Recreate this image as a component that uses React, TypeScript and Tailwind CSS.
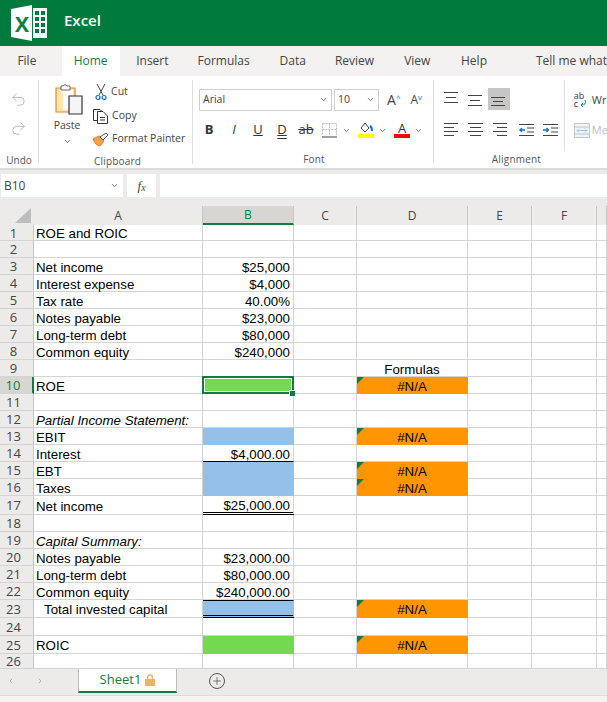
import { ChevronDown, Undo2, Redo2, Plus, ChevronLeft, ChevronRight } from 'lucide-react'

const UI = "font-['Open_Sans',sans-serif]"
const colWidths = ['w-[169px]', 'w-[91px]', 'w-[63px]', 'w-[111px]', 'w-[64px]', 'w-[65px]', 'w-[10px]']
const colNames = ['A', 'B', 'C', 'D', 'E', 'F', '']

type Row = {
  a?: string
  italic?: boolean
  indent?: boolean
  b?: string
  fill?: 'blue' | 'green'
  line?: string
  d?: string
  na?: boolean
  h?: string
}

const NA = { d: '#N/A', na: true }

// rows 1-26 of the sheet
const rows: Row[] = [
  { a: 'ROE and ROIC', h: 'h-[16px]' },
  {},
  { a: 'Net income', b: '$25,000' },
  { a: 'Interest expense', b: '$4,000' },
  { a: 'Tax rate', b: '40.00%' },
  { a: 'Notes payable', b: '$23,000' },
  { a: 'Long-term debt', b: '$80,000' },
  { a: 'Common equity', b: '$240,000' },
  { d: 'Formulas' },
  { a: 'ROE', fill: 'green', ...NA },
  {},
  { a: 'Partial Income Statement:', italic: true },
  { a: 'EBIT', fill: 'blue', ...NA },
  { a: 'Interest', b: '$4,000.00', line: 'border-b border-b-black' },
  { a: 'EBT', fill: 'blue', ...NA },
  { a: 'Taxes', fill: 'blue', ...NA },
  { a: 'Net income', b: '$25,000.00', h: 'h-[19px]', line: 'border-b-[3px] border-b-black border-double' },
  {},
  { a: 'Capital Summary:', italic: true },
  { a: 'Notes payable', b: '$23,000.00' },
  { a: 'Long-term debt', b: '$80,000.00' },
  { a: 'Common equity', b: '$240,000.00' },
  { a: 'Total invested capital', indent: true, fill: 'blue', h: 'h-[18px]', line: 'border-t border-t-black border-b-[3px] border-b-black border-double', ...NA },
  { h: 'h-[18px]' },
  { a: 'ROIC', fill: 'green', h: 'h-[18px]', ...NA },
  { h: 'h-[15px]' },
]

function ExcelLogo() {
  return (
    <div className="relative w-[37px] h-[36px]">
      <svg width="37" height="36" viewBox="0 0 37 36">
        <path d="M0 4 L21 0 V36 L0 32 Z" fill="#fff" />
        <path d="M22 3 H36 V33 H22 Z M24 6 V10 H28 V6 Z M30 6 V10 H34 V6 Z M24 12 V16 H28 V12 Z M30 12 V16 H34 V12 Z M24 18 V22 H28 V18 Z M30 18 V22 H34 V18 Z M24 24 V28 H28 V24 Z M30 24 V28 H34 V24 Z" fill="#fff" fillRule="evenodd" />
      </svg>
      <span className="absolute left-[4px] top-[6px] text-[#107c41] text-[21px] font-bold font-['Open_Sans',sans-serif] leading-[26px]">X</span>
    </div>
  )
}

function Tab({ label, active, w }: { label: string; active?: boolean; w: string }) {
  return (
    <div className={`${w} h-full flex items-center justify-center text-[12px] ${active ? 'bg-white text-[#107c41]' : 'text-[#444]'}`}>
      {label}
    </div>
  )
}

function PasteIcon() {
  return (
    <svg width="29" height="32" viewBox="0 0 29 32">
      <path d="M1 4 H20 V28 H1 Z" fill="#fde6a8" stroke="#e0892b" strokeWidth="1.2" />
      <path d="M3 6 H18 V26 H3 Z" fill="#fff" />
      <path d="M3 6 V26 H8 V8 Z" fill="#fde6a8" />
      <path d="M6 2 H8 Q10 -1 12 2 H15 V6 H6 Z" fill="#fff" stroke="#666" />
      <path d="M14 12 H27 V30 H14 Z" fill="#f5f5f5" stroke="#333" strokeWidth="1.2" />
    </svg>
  )
}

function CutIcon() {
  return (
    <svg width="12" height="18" viewBox="0 0 12 18" fill="none">
      <path d="M2 1 L8 12 M10 1 L4 12" stroke="#444" />
      <circle cx="3" cy="14.5" r="2" stroke="#0a74c9" strokeWidth="1.2" />
      <circle cx="9" cy="14.5" r="2" stroke="#0a74c9" strokeWidth="1.2" />
    </svg>
  )
}

function CopyIcon() {
  return (
    <svg width="17" height="16" viewBox="0 0 17 16" fill="none" stroke="#333">
      <path d="M5 12.5 H1.5 V1.5 H8 L10 3.5" />
      <path d="M5.5 3.5 H11 L15.5 8 V15.5 H5.5 Z" fill="#fff" />
      <path d="M8 9.5 H13 M8 12 H13" />
    </svg>
  )
}

function BrushIcon() {
  return (
    <svg width="17" height="15" viewBox="0 0 17 15">
      <path d="M1 7 L7 4 L12 9 L8 14 Q3 13 1 7 Z" fill="#f2a04a" stroke="#e0802a" />
      <path d="M8 5 L14 1 L16 3 L11 8 Z" fill="#fff" stroke="#555" />
    </svg>
  )
}

function Lines({ widths, y }: { widths: number[]; y: number[] }) {
  // little stack of text lines for the alignment buttons
  return (
    <svg width="15" height="16" viewBox="0 0 15 16" stroke="#444" strokeWidth="1">
      {y.map((v, i) => (
        <path key={i} d={`M${widths[i * 2]} ${v}.5 H${widths[i * 2 + 1]}`} />
      ))}
    </svg>
  )
}

function Indent({ flip }: { flip?: boolean }) {
  return (
    <svg width="15" height="14" viewBox="0 0 15 14" fill="none">
      <path d="M0 1.5 H15 M8 5 H15 M8 9 H15 M0 12.5 H15" stroke="#444" />
      {flip ? (
        <path d="M0 7 H5 M3.5 5 L5.5 7 L3.5 9" stroke="#0a74c9" strokeWidth="1.3" />
      ) : (
        <path d="M6 7 H1 M3 5 L1 7 L3 9" stroke="#0a74c9" strokeWidth="1.3" />
      )}
    </svg>
  )
}

function Sep() {
  return <div className="w-px h-[84px] bg-[#e1dfdd]" />
}

function GroupLabel({ label, w }: { label: string; w: string }) {
  return <div className={`${w} text-center text-[10px] leading-[14px] text-[#555] tracking-[0.2px]`}>{label}</div>
}

function Caret({ className = '' }: { className?: string }) {
  return <ChevronDown size={9} strokeWidth={2} className={`shrink-0 text-[#444] ${className}`} />
}

function Ribbon() {
  return (
    <div className={`h-[92px] bg-white flex pt-[4px] overflow-hidden ${UI} text-[#444]`}>
      {/* Undo */}
      <div className="w-[39px] flex flex-col items-center">
        <Undo2 size={17} strokeWidth={1} className="mt-[11px] ml-[-2px] text-[#a0a0a0]" />
        <Redo2 size={17} strokeWidth={1} className="mt-[12px] ml-[-2px] text-[#a0a0a0]" />
        <div className="mt-[16px] text-[10px] leading-[14px] text-[#555]">Undo</div>
      </div>
      <Sep />
      {/* Clipboard */}
      <div className="w-[153px] shrink-0 flex flex-col">
        <div className="flex h-[72px]">
          <div className="w-[42px] ml-[9px] flex flex-col items-center pt-[4px]">
            <PasteIcon />
            <div className="text-[10.5px] leading-[14px] mt-[2px] -ml-[4px]">Paste</div>
            <Caret className="mt-[5px] -ml-[4px]" />
          </div>
          <div className="flex flex-col text-[10.5px] ml-[2px]">
            <div className="h-[24px] flex items-center gap-[4px] pl-[3px]">
              <CutIcon />
              <span>Cut</span>
            </div>
            <div className="h-[24px] flex items-center gap-[3px]">
              <CopyIcon />
              <span>Copy</span>
            </div>
            <div className="h-[24px] flex items-center gap-[3px] whitespace-nowrap -mt-[1px]">
              <BrushIcon />
              <span>Format Painter</span>
            </div>
          </div>
        </div>
        <GroupLabel label="Clipboard" w="w-full mt-[2px] pl-[4px]" />
      </div>
      <Sep />
      {/* Font */}
      <div className="w-[240px] shrink-0 flex flex-col">
        <div className="flex items-center h-[21px] mt-[9px] ml-[6px] gap-[2px]">
          <div className="w-[133px] h-[22px] border border-[#d0d0d0] flex items-center justify-between px-[3px] text-[10.5px]">
            Arial <Caret />
          </div>
          <div className="w-[45px] h-[22px] border border-[#d0d0d0] flex items-center justify-between px-[3px] text-[10.5px]">
            10 <Caret />
          </div>
          <div className="ml-[6px] text-[14px] leading-none">A<sup className="text-[#0a74c9] text-[8px]">^</sup></div>
          <div className="ml-[8px] text-[12px] leading-none">A<sup className="text-[#0a74c9] text-[8px]">v</sup></div>
        </div>
        <div className="flex items-center h-[24px] mt-[8px] ml-[4px] text-[13px] text-[#333]">
          <div className="w-[24px] text-center font-bold">B</div>
          <div className="w-[26px] text-center italic">I</div>
          <div className="w-[22px] text-center underline">U</div>
          <div className="w-[26px] text-center underline decoration-double">D</div>
          <div className="w-[22px] text-center line-through">ab</div>
          <svg width="15" height="15" viewBox="0 0 15 15" className="ml-[5px]" fill="none">
            <path d="M.5.5 H14.5 V12 M.5.5 V12 M7.5.5 V12 M.5 6.5 H14.5" stroke="#bbb" strokeDasharray="2 1" />
            <path d="M0 14 H15" stroke="#444" />
          </svg>
          <Caret className="ml-[5px]" />
          <div className="ml-[7px] w-[16px] flex flex-col items-center">
            <svg width="13" height="12" viewBox="0 0 13 12" fill="none">
              <path d="M5 1 L1 6 L5 10 L9 6 Z" stroke="#444" />
              <path d="M10 4 Q12 5 12 9" stroke="#0a74c9" strokeWidth="2" />
            </svg>
            <div className="w-[16px] h-[4px] bg-[#ffff00]" />
          </div>
          <Caret className="ml-[4px]" />
          <div className="ml-[7px] w-[16px] flex flex-col items-center">
            <span className="text-[13px] leading-[12px]">A</span>
            <div className="w-[16px] h-[4px] bg-[#ff0000]" />
          </div>
          <Caret className="ml-[4px]" />
        </div>
        <GroupLabel label="Font" w="w-full mt-[10px] pl-[2px]" />
      </div>
      <Sep />
      {/* Alignment */}
      <div className="shrink-0 flex flex-col w-[173px]">
        <div className="flex h-[71px]">
          <div className="w-[133px] pl-[10px] pt-[8px]">
            <div className="flex items-center h-[22px]">
              <div className="w-[24px]"><Lines widths={[0, 14, 2, 12, 0, 14]} y={[1, 6, 11]} /></div>
              <div className="w-[20px]"><Lines widths={[0, 14, 2, 12, 0, 14]} y={[4, 9, 14]} /></div>
              <div className="w-[22px] h-[22px] bg-[#c8c6c4] flex items-center justify-center"><Lines widths={[0, 14, 2, 12, 0, 14]} y={[6, 10, 14]} /></div>
            </div>
            <div className="flex items-center h-[24px] mt-[8px]">
              <div className="w-[24px]"><Lines widths={[0, 14, 0, 10, 0, 14, 0, 10]} y={[1, 5, 9, 13]} /></div>
              <div className="w-[25px]"><Lines widths={[0, 15, 2, 13, 0, 15, 2, 13]} y={[1, 5, 9, 13]} /></div>
              <div className="w-[26px]"><Lines widths={[0, 14, 4, 14, 0, 14, 4, 14]} y={[1, 5, 9, 13]} /></div>
              <div className="w-[24px]"><Indent /></div>
              <div className="w-[20px]"><Indent flip /></div>
            </div>
          </div>
          <div className="w-px h-[71px] bg-[#e1dfdd]" />
          <div className="pl-[9px] pt-[9px] text-[11px] whitespace-nowrap overflow-hidden">
            <div className="flex items-center gap-[2px] h-[22px]">
              <div className="w-[16px] flex flex-col text-[9px] leading-[8px] text-[#333]">
                <span className="h-[8px]">ab</span>
                <div className="flex items-center h-[8px]">
                  <span>c</span>
                  <svg width="9" height="8" viewBox="0 0 9 8" fill="none"><path d="M7 0 Q9 5 3 5 M5 3 L3 5 L5 7" stroke="#0a74c9" /></svg>
                </div>
              </div>
              <span>Wr</span>
            </div>
            <div className="flex items-center gap-[2px] h-[22px] mt-[8px] text-[#bbb]">
              <svg width="16" height="15" viewBox="0 0 16 15" fill="none" className="shrink-0">
                <path d="M.5.5 H15.5 V14.5 H.5 Z" fill="#eef5fb" stroke="#c4c4c4" />
                <path d="M.5 4 H15.5 M.5 11 H15.5" stroke="#c4c4c4" />
                <path d="M3 7.5 H13 M5 5.5 L3 7.5 L5 9.5 M11 5.5 L13 7.5 L11 9.5" stroke="#9fcdee" />
              </svg>
              <span>Me</span>
            </div>
          </div>
        </div>
        <GroupLabel label="Alignment" w="w-full mt-[1px] pr-[8px]" />
      </div>
    </div>
  )
}

function FormulaBar() {
  return (
    <div className={`h-[28px] bg-[#edebe9] flex pt-[4px] pb-[1px] gap-[4px] ${UI}`}>
      <div className="w-[122px] ml-[1px] bg-white flex items-center justify-between pl-[3px] pr-[4px] text-[12px] text-[#444]">
        B10 <Caret />
      </div>
      <div className="w-[29px] bg-white flex items-center justify-center font-['Liberation_Serif',serif] italic text-[13px] text-[#444]">
        f<sub>x</sub>
      </div>
      <div className="flex-1 bg-white" />
    </div>
  )
}

function Cell({ w, className = '', children }: { w: string; className?: string; children?: React.ReactNode }) {
  return (
    <div className={`${w} shrink-0 h-full border-r border-b border-[#d4d4d4] flex items-center relative pt-[3px] leading-[14px] ${className}`}>
      {children}
    </div>
  )
}

function Sheet() {
  return (
    <div className="bg-white flex-1 overflow-hidden font-['Liberation_Sans',sans-serif] text-[13.3px] text-black">
      {/* column headers */}
      <div className={`h-[27px] flex bg-[#edebe9] pt-[8px] text-[12px] text-[#444] ${UI}`}>
        <div className="w-[34px] h-full shrink-0 flex items-end justify-end pr-[3px] pb-[2px]">
          <svg width="16" height="15" viewBox="0 0 16 15"><path d="M16 0 V15 H0 Z" fill="#bdbdbd" /></svg>
        </div>
        {colNames.map((c, i) => (
          <div
            key={i}
            className={`${colWidths[i]} shrink-0 flex items-center justify-center border-r border-[#c8c6c4] ${c === 'B' ? 'bg-[#d8d6d3] text-[#107c41] border-b-2 border-b-[#107c41]' : ''}`}
          >
            {c}
          </div>
        ))}
      </div>
      {rows.map((r, i) => {
        const selected = i === 9
        let fill = ''
        if (r.fill === 'blue') fill = r.line ? 'bg-[#95c0e8] border-r-[#95c0e8]' : 'bg-[#95c0e8] border-r-[#95c0e8] border-b-[#95c0e8]'
        if (r.fill === 'green') fill = 'bg-[#73d94f] border-r-[#73d94f] border-b-[#73d94f]'
        return (
          <div key={i} className={`${r.h ?? 'h-[17px]'} flex`}>
            <div className={`w-[34px] shrink-0 flex items-center justify-center pr-[6px] text-[13px] leading-[14px] text-[#444] border-b border-[#d4d4d4] ${UI} ${selected ? 'bg-[#d8d6d3] !text-[#107c41] border-r-2 border-r-[#107c41]' : 'bg-[#edebe9] border-r border-r-[#c8c6c4]'}`}>
              {i + 1}
            </div>
            <Cell w={colWidths[0]} className={`${r.indent ? 'pl-[10px]' : 'pl-[2px]'} ${r.italic ? 'italic' : ''}`}>
              <span className="whitespace-nowrap">{r.a}</span>
            </Cell>
            <Cell w={colWidths[1]} className={`justify-end pr-[3px] ${fill} ${r.line ?? ''}`}>
              {r.b}
              {selected && (
                <>
                  <div className="absolute z-10 inset-[-1px] border-2 border-[#107c41]">
                    <div className="w-full h-full border border-white" />
                  </div>
                  <div className="absolute z-10 right-[-2px] bottom-[-3px] w-[6px] h-[6px] bg-[#107c41] border-l border-t border-white" />
                </>
              )}
            </Cell>
            <Cell w={colWidths[2]} />
            <Cell w={colWidths[3]} className={`justify-center ${r.na ? 'bg-[#ff9500] border-r-[#ff9500] border-b-[#ff9500]' : ''}`}>
              {r.d}
              {r.na && <div className="absolute left-0 top-0 w-0 h-0 border-t-[7px] border-t-[#107c41] border-r-[7px] border-r-transparent" />}
            </Cell>
            <Cell w={colWidths[4]} />
            <Cell w={colWidths[5]} />
            <Cell w={colWidths[6]} />
          </div>
        )
      })}
    </div>
  )
}

function SheetTabs() {
  return (
    <div className={`h-[33px] shrink-0 bg-[#edebe9] ${UI}`}>
      <div className="h-[26px] flex items-start">
        <div className="w-[78px] h-[24px] flex items-center pl-[7px] gap-[21px] text-[#b5b5b5]">
          <ChevronLeft size={8} strokeWidth={3} />
          <ChevronRight size={8} strokeWidth={3} />
        </div>
        <div className="w-[99px] h-[24px] bg-white border-l border-r border-[#bbb] border-b-2 border-b-[#107c41] flex items-center justify-center gap-[4px] text-[13px] font-medium text-[#107c41]">
          Sheet1
          <svg width="10" height="12" viewBox="0 0 10 12" fill="none">
            <path d="M2.5 5 V3.5 a2.5 2.5 0 0 1 5 0 V5" stroke="#e8b36b" strokeWidth="1.5" />
            <path d="M0 5 H10 V12 H0 Z" fill="#e8b36b" />
          </svg>
        </div>
        <div className="ml-[32px] mt-[4px] w-[16px] h-[16px] rounded-full border border-[#555] flex items-center justify-center">
          <Plus size={12} strokeWidth={1.5} className="text-[#555]" />
        </div>
      </div>
      <div className="h-[7px] bg-[#f5f4f3] border-t border-[#dcdcdc]" />
    </div>
  )
}

export default function App() {
  return (
    <div className="w-[607px] h-[702px] flex flex-col overflow-hidden">
      <div className={`h-[46px] bg-[#017a3e] flex items-center pl-[11px] gap-[16px] text-white ${UI}`}>
        <ExcelLogo />
        <span className="text-[15px] font-semibold -mt-[6px]">Excel</span>
      </div>
      <div className={`h-[30px] bg-[#f3f2f1] flex whitespace-nowrap overflow-hidden ${UI}`}>
        <Tab label="File" w="w-[54px]" />
        <Tab label="Home" active w="w-[58px] ml-[8px]" />
        <Tab label="Insert" w="w-[66px]" />
        <Tab label="Formulas" w="w-[77px]" />
        <Tab label="Data" w="w-[62px]" />
        <Tab label="Review" w="w-[62px]" />
        <Tab label="View" w="w-[64px]" />
        <Tab label="Help" w="w-[50px]" />
        <div className="ml-[37px] h-full flex items-center text-[12px] text-[#444]">Tell me what</div>
      </div>
      <Ribbon />
      <div className="h-[2px] bg-[#dcdcdc]" />
      <FormulaBar />
      <Sheet />
      <SheetTabs />
    </div>
  )
}
